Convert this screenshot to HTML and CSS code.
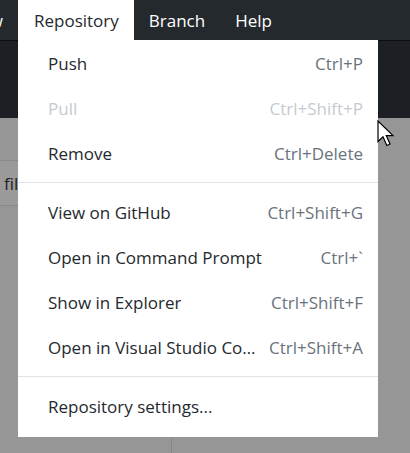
FILE: index.html
```html
<!DOCTYPE html>
<html>
<head>
<meta charset="utf-8">
<link rel="stylesheet" href="styles.css">
</head>
<body>
<div class="app">
  <div class="topbar">
    <div class="clip"><span class="top-item">View</span></div>
    <span class="top-item active">Repository</span>
    <span class="top-item">Branch</span>
    <span class="top-item">Help</span>
  </div>
  <div class="toolbar"></div>
  <div class="content">
    <div class="filter"><span class="filter-text">filter</span></div>
    <div class="spacer"></div>
    <div class="bottom">
      <div class="pane-left"></div>
      <div class="pane-right"></div>
    </div>
  </div>

  <div class="menu">
    <div class="item"><span class="label">Push</span><span class="key">Ctrl+P</span></div>
    <div class="item disabled"><span class="label">Pull</span><span class="key">Ctrl+Shift+P</span></div>
    <div class="item"><span class="label">Remove</span><span class="key">Ctrl+Delete</span></div>
    <div class="sep"></div>
    <div class="item"><span class="label">View on GitHub</span><span class="key">Ctrl+Shift+G</span></div>
    <div class="item"><span class="label">Open in Command Prompt</span><span class="key">Ctrl+`</span></div>
    <div class="item"><span class="label">Show in Explorer</span><span class="key">Ctrl+Shift+F</span></div>
    <div class="item"><span class="label">Open in Visual Studio Code</span><span class="key">Ctrl+Shift+A</span></div>
    <div class="sep"></div>
    <div class="item"><span class="label">Repository settings...</span></div>
  </div>

  <svg class="cursor" width="20" height="28" viewBox="0 0 20 28">
    <path d="M1 1 L1 21.5 L6 16.8 L9.8 25.5 L13 24 L9.3 15.6 L16 15.6 Z" fill="#fff" stroke="#000" stroke-width="1.2" stroke-linejoin="miter"/>
  </svg>
</div>
</body>
</html>
```
FILE: styles.css
```css
html, body {
  margin: 0;
  padding: 0;
}
body {
  width: 410px;
  height: 453px;
  overflow: hidden;
  font-family: "Open Sans", "Noto Sans", "Liberation Sans", sans-serif;
  background: #969696;
}
.app {
  position: relative;
  width: 410px;
  height: 453px;
  display: flex;
  flex-direction: column;
}
.topbar {
  height: 40px;
  background: #24292e;
  display: flex;
  align-items: stretch;
  flex-shrink: 0;
}
.clip {
  width: 18px;
  overflow: hidden;
  display: flex;
  justify-content: flex-end;
}
.top-item {
  display: flex;
  align-items: center;
  padding: 0 15px;
  color: #ffffff;
  font-size: 17px;
  white-space: nowrap;
}
.top-item.active {
  background: #ffffff;
  color: #24292e;
  padding: 0 15px 0 16px;
}
.toolbar {
  height: 77px;
  flex-shrink: 0;
  background: #1c2024;
  border-top: 1px solid #0c0d0e;
}
.content {
  flex: 1;
  display: flex;
  flex-direction: column;
  background: #969696;
}
.filter {
  margin-top: 42px;
  height: 44px;
  width: 60px;
  background: #9a9a9a;
  border-top: 1px solid #8a8a8a;
  border-bottom: 1px solid #8a8a8a;
  display: flex;
  align-items: center;
  padding-left: 4px;
  color: #1b1f23;
  font-size: 17px;
}
.spacer {
  flex: 1;
}
.bottom {
  height: 16px;
  display: flex;
}
.pane-left {
  width: 171px;
  border-right: 1px solid #888888;
}
.menu {
  position: absolute;
  left: 18px;
  top: 40px;
  width: 360px;
  height: 397px;
  box-sizing: border-box;
  background: #ffffff;
  padding: 1px 0 0;
  display: flex;
  flex-direction: column;
}
.item {
  height: 45px;
  display: flex;
  align-items: center;
  justify-content: space-between;
  padding: 0 15px 0 30px;
  font-size: 17px;
  color: #24292e;
  white-space: nowrap;
  gap: 10px;
}
.label {
  overflow: hidden;
  text-overflow: ellipsis;
  min-width: 0;
}
.key {
  color: #6a737d;
  flex-shrink: 0;
}
.item.disabled .label,
.item.disabled .key {
  color: #c6cacf;
}
.sep {
  height: 1px;
  background: #e1e4e8;
  margin: 6px 0 7px;
}
.cursor {
  position: absolute;
  left: 377px;
  top: 120px;
}
```
